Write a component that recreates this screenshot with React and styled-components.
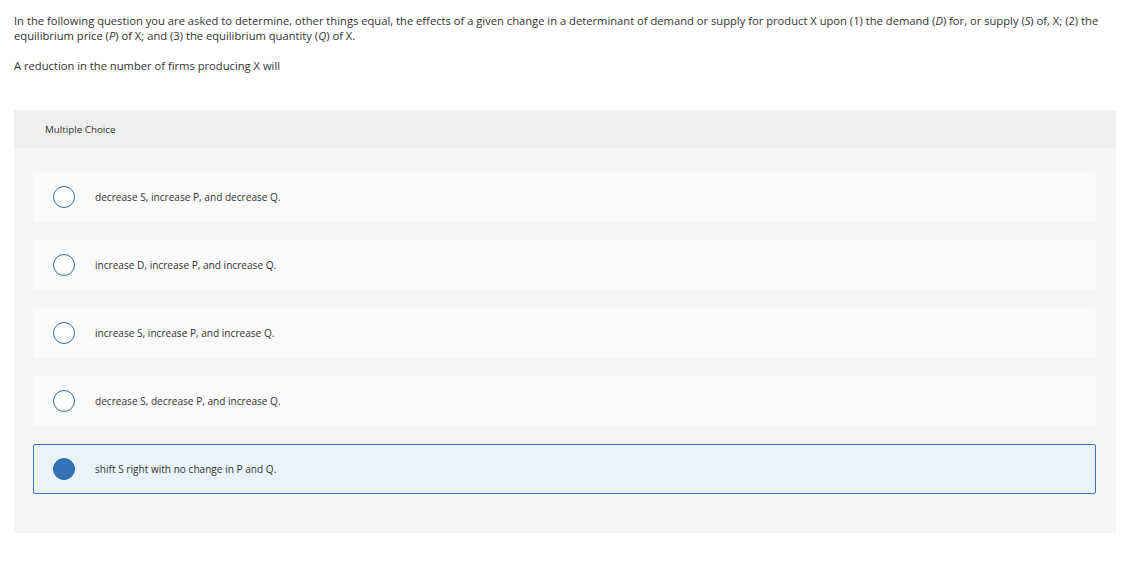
import React, { useState } from 'react';
import styled, { createGlobalStyle } from 'styled-components';

const choices = [
    'decrease S, increase P, and decrease Q.',
    'increase D, increase P, and increase Q.',
    'increase S, increase P, and increase Q.',
    'decrease S, decrease P, and increase Q.',
    'shift S right with no change in P and Q.',
];

function App() {
    const [selected, setSelected] = useState(4);

    return (
        <Page>
            <GlobalStyle />
            <Prompt>
                In the following question you are asked to determine, other things equal, the effects of a given
                change in a determinant of demand or supply for product X upon (1) the demand (<Var>D</Var>) for, or
                supply (<Var>S</Var>) of, X; (2) the equilibrium price (<Var>P</Var>) of X; and (3) the equilibrium
                quantity (<Var>Q</Var>) of X.
            </Prompt>
            <Prompt>A reduction in the number of firms producing X will</Prompt>
            <Panel>
                <PanelHeader>Multiple Choice</PanelHeader>
                <ChoiceList>
                    {choices.map((text, i) => (
                        <Choice key={text} $active={selected === i} onClick={() => setSelected(i)}>
                            <Radio $active={selected === i} />
                            <ChoiceText>{text}</ChoiceText>
                        </Choice>
                    ))}
                </ChoiceList>
            </Panel>
        </Page>
    );
}

const GlobalStyle = createGlobalStyle`
    body {
        margin: 0;
        background: #fff;
        font-family: "Open Sans", Lato, "Liberation Sans", sans-serif;
        color: #333;
    }
`;

const Page = styled.div`
    padding: 13px 21px 0 14px;
`;

const Prompt = styled.p`
    margin: 0 0 15px 0;
    font-size: 11.2px;
    line-height: 15px;
    color: #333;
`;

const Var = styled.em`
    font-style: italic;
`;

const Panel = styled.div`
    margin-top: 37px;
    width: 1102px;
    background: #f5f5f5;
    padding-bottom: 39px;
`;

const PanelHeader = styled.div`
    height: 38px;
    background: #efefef;
    display: flex;
    align-items: center;
    padding-left: 31px;
    font-size: 9.8px;
    color: #333;
`;

const ChoiceList = styled.div`
    display: flex;
    flex-direction: column;
    gap: 18px;
    padding: 24px 20px 0 19px;
`;

const Choice = styled.div`
    height: 50px;
    box-sizing: border-box;
    display: flex;
    align-items: center;
    padding-left: 19px;
    background: ${(p) => (p.$active ? '#eaf2fb' : '#fafafa')};
    border: 1px solid ${(p) => (p.$active ? '#3a78c0' : 'transparent')};
    border-radius: 2px;
    cursor: pointer;
`;

const Radio = styled.span`
    width: 22px;
    height: 22px;
    box-sizing: border-box;
    border-radius: 50%;
    border: 1.5px solid ${(p) => (p.$active ? '#2a64a0' : '#2f6ca3')};
    background: ${(p) => (p.$active ? '#3375b7' : '#fff')};
    flex-shrink: 0;
`;

const ChoiceText = styled.span`
    margin-left: 20px;
    font-size: 10.1px;
    color: #333;
`;

export default App;
